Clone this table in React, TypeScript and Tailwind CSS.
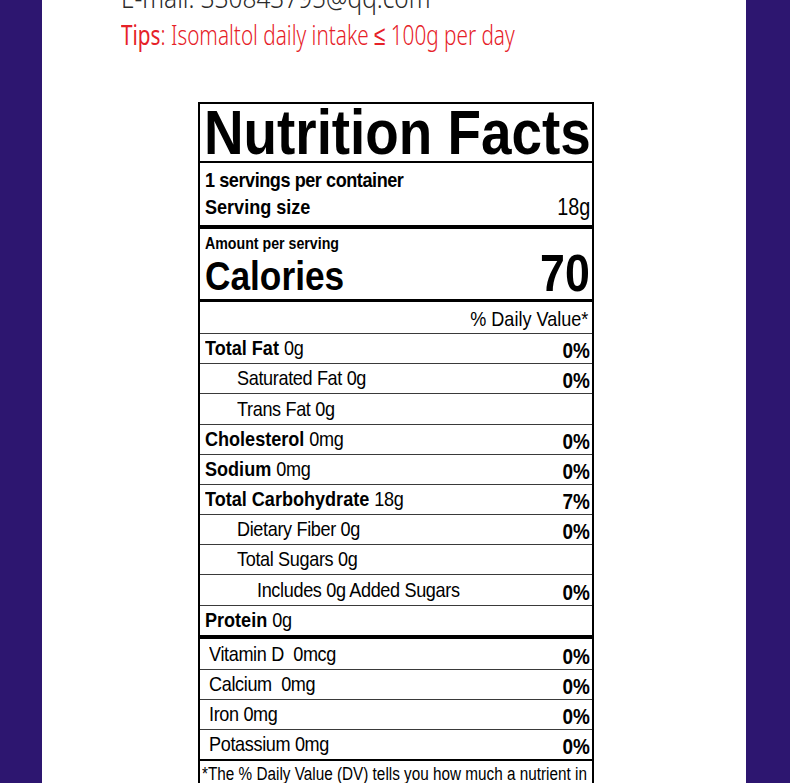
import React from 'react';

const Sq: React.FC<{ children: React.ReactNode; right?: boolean; className?: string }> = ({ children, right, className = '' }) => (
  <span
    className={`inline-block whitespace-nowrap ${right ? 'origin-right' : 'origin-left'} ${className || 'scale-x-[0.86]'}`}
  >
    {children}
  </span>
);

interface RowProps {
  bold?: string;
  text: string;
  pct?: string;
  indent?: 'none' | 'one' | 'two' | 'vit';
  line?: boolean;
  tall?: boolean;
}

const indentClass = {
  none: 'pl-[5px]',
  one: 'pl-[37px]',
  two: 'pl-[57px]',
  vit: 'pl-[9px]',
};

const Row: React.FC<RowProps> = ({ bold, text, pct, indent = 'none', line = true, tall }) => (
  <div
    className={`flex items-stretch justify-between pr-[2px] ${tall ? 'h-[31px]' : 'h-[30px]'} ${line ? 'border-t border-[#3a3a3a]' : ''}`}
  >
    <div className={`flex items-center pb-[2px] text-[21px] leading-none ${indentClass[indent]}`}>
      <Sq>
        {bold && <span className="font-bold">{bold}</span>}
        <span className="whitespace-pre tracking-[-0.4px]">{text}</span>
      </Sq>
    </div>
    {pct && (
      <div className="flex items-end pb-[1px] text-[22px] font-bold leading-none">
        <Sq right>{pct}</Sq>
      </div>
    )}
  </div>
);

export default function App() {
  return (
    <div className="h-[783px] w-[790px] overflow-hidden bg-[#2d1670]">
      <div className="ml-[42px] h-full w-[704px] overflow-hidden bg-white">
        <div className="pl-[79px] font-['Noto_Sans',sans-serif] font-light">
          <div className="-mt-[20px] h-[34px] text-[28px] leading-[34px] text-[#2a2a2a]">
            <Sq className="scale-x-[0.87]">E-mail: 330843795@qq.com</Sq>
          </div>
          <div className="mt-[3px] h-[34px] text-[28px] leading-[34px] text-[#e62128]">
            <Sq className="scale-x-[0.74]">
              <span className="font-normal">Tips</span>: Isomaltol daily intake ≤ 100g per day
            </Sq>
          </div>
        </div>

        <div className="ml-[156px] mt-[51px] w-[396px] border-2 border-b-0 border-black font-['Liberation_Sans',Arial,sans-serif] text-black">
          <div className="h-[57px] pl-[4px] text-[63px] font-bold leading-[57px]">
            <Sq className="scale-x-[0.87]">Nutrition Facts</Sq>
          </div>
          <div className="h-[2px] bg-black" />
          <div className="flex h-[62px] flex-col pl-[5px] pr-[2px] pt-[4px]">
            <div className="text-[21px] font-bold leading-[26px] tracking-[-0.5px]">
              <Sq>1 servings per container</Sq>
            </div>
            <div className="flex items-end justify-between text-[21px] leading-[28px]">
              <span className="font-bold">
                <Sq>Serving size</Sq>
              </span>
              <span className="text-[23px]">
                <Sq right>18g</Sq>
              </span>
            </div>
          </div>
          <div className="h-[4px] bg-black" />
          <div className="flex h-[70px] flex-col pl-[5px] pr-[2px] pt-[5px]">
            <div className="text-[16.5px] font-bold leading-[18px]">
              <Sq>Amount per serving</Sq>
            </div>
            <div className="-mt-[5px] flex items-end justify-between font-bold">
              <span className="text-[41px] leading-[46px]">
                <Sq>Calories</Sq>
              </span>
              <span className="text-[52px] leading-[52px]">
                <Sq right>70</Sq>
              </span>
            </div>
          </div>
          <div className="h-[3px] bg-black" />
          <div className="flex h-[31px] items-center justify-end pr-[4px] pt-[1px] text-[21px] leading-none">
            <Sq right>% Daily Value*</Sq>
          </div>
          <Row bold="Total Fat " text="0g" pct="0%" />
          <Row text="Saturated Fat 0g" pct="0%" indent="one" />
          <Row text="Trans Fat 0g" indent="one" tall />
          <Row bold="Cholesterol " text="0mg" pct="0%" />
          <Row bold="Sodium " text="0mg" pct="0%" />
          <Row bold="Total Carbohydrate " text="18g" pct="7%" />
          <Row text="Dietary Fiber 0g" pct="0%" indent="one" />
          <Row text="Total Sugars 0g" indent="one" />
          <Row text="Includes 0g Added Sugars" pct="0%" indent="two" tall />
          <Row bold="Protein " text="0g" />
          <div className="h-[4px] bg-black" />
          <Row text="Vitamin D  0mcg" pct="0%" indent="vit" line={false} />
          <Row text="Calcium  0mg" pct="0%" indent="vit" />
          <Row text="Iron 0mg" pct="0%" indent="vit" />
          <Row text="Potassium 0mg" pct="0%" indent="vit" />
          <div className="h-[2px] bg-black" />
          <div className="h-[60px] pl-[2px] pt-[2px] text-[18px] leading-[22px]">
            <Sq className="scale-x-[0.85]">*The % Daily Value (DV) tells you how much a nutrient in</Sq>
          </div>
        </div>
      </div>
    </div>
  );
}
